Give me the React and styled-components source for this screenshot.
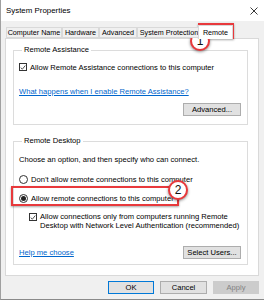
import React from "react";
import styled, { createGlobalStyle } from "styled-components";

const Global = createGlobalStyle`
  html, body { margin: 0; padding: 0; background: #fff; }
  body { font-family: "Liberation Sans", Arial, sans-serif; }
`;

const Window = styled.div`
  position: relative;
  width: 264px;
  height: 300px;
  box-sizing: border-box;
  background: #f0f0f0;
  border-left: 1px solid #a0a0a0;
  border-bottom: 1px solid #8a8a8a;
  overflow: hidden;
  color: #000;
  font-size: 7.6px;
`;

const TitleBar = styled.div`
  height: 21px;
  background: #fff;
  display: flex;
  align-items: center;
  justify-content: space-between;
  padding: 0 6px 0 5px;
  font-size: 7.9px;
`;

const Body = styled.div`
  padding: 3px 5px 0 4px;
`;

const TabStrip = styled.div`
  display: flex;
  align-items: flex-end;
  height: 14px;
  padding-left: 1px;
  position: relative;
  z-index: 1;
`;

const Tab = styled.div`
  position: relative;
  z-index: ${(p) => (p.$active ? 2 : 1)};
  width: ${(p) => p.$w}px;
  height: ${(p) => (p.$active ? "14px" : "11px")};
  margin-bottom: ${(p) => (p.$active ? "-1px" : "0")};
  margin-left: ${(p) => p.$shift || 0}px;
  box-sizing: border-box;
  overflow: hidden;
  display: flex;
  align-items: center;
  justify-content: center;
  background: ${(p) => (p.$active ? "#fff" : "#f0f0f0")};
  border: 1px solid #d9d9d9;
  border-bottom: ${(p) => (p.$active ? "none" : "1px solid #d9d9d9")};
  & + & { border-left: ${(p) => (p.$active ? "1px solid #d9d9d9" : "none")}; }
  white-space: nowrap;
  font-size: 7.2px;
`;

const Panel = styled.div`
  background: #fff;
  border: 1px solid #d9d9d9;
  height: 238px;
  box-sizing: border-box;
  padding: 6px 10px 0 7px;
`;

const Group = styled.fieldset`
  margin: 0 0 ${(p) => p.$gap || 0}px 0;
  padding: ${(p) => p.$pad};
  border: 1px solid #dcdcdc;
  min-width: 0;
`;

const Legend = styled.legend`
  padding: 0 2px;
  margin-left: 3px;
  line-height: 10px;
`;

const Row = styled.div`
  display: flex;
  align-items: center;
  gap: 3px;
  height: 10px;
  margin-top: ${(p) => p.$top || 0}px;
  padding-left: ${(p) => p.$indent || 0}px;
  white-space: nowrap;
`;

const Text = styled.div`
  line-height: 10px;
  margin-top: ${(p) => p.$top || 0}px;
`;

const Link = styled.span`
  color: #0066cc;
  text-decoration: underline;
`;

const Box = styled.span`
  width: 8px;
  height: 8px;
  box-sizing: border-box;
  border: 1px solid #333;
  background: #fff;
  display: inline-flex;
  align-items: center;
  justify-content: center;
  flex: none;
`;

const Radio = styled.span`
  width: 9px;
  height: 9px;
  box-sizing: border-box;
  border: 1px solid #333;
  border-radius: 50%;
  background: #fff;
  display: inline-flex;
  align-items: center;
  justify-content: center;
  flex: none;
  &::after {
    content: "";
    display: ${(p) => (p.$on ? "block" : "none")};
    width: 5px;
    height: 5px;
    border-radius: 50%;
    background: #222;
  }
`;

const CheckRow = styled.div`
  display: flex;
  align-items: flex-start;
  gap: 3px;
  margin-top: ${(p) => p.$top || 0}px;
  padding-left: ${(p) => p.$indent || 0}px;
  line-height: 9px;
  white-space: nowrap;
  & > span:first-child { margin-top: 1px; }
`;

const BtnRow = styled.div`
  display: flex;
  justify-content: ${(p) => p.$justify || "flex-end"};
  align-items: center;
  gap: 6px;
  margin-top: ${(p) => p.$top || 0}px;
`;

const Button = styled.div`
  width: ${(p) => p.$w || 58}px;
  height: 13px;
  box-sizing: border-box;
  border: 1px solid ${(p) => (p.$primary ? "#0078d7" : p.$disabled ? "#cccccc" : "#adadad")};
  background: ${(p) => (p.$disabled ? "#cccccc" : "#e1e1e1")};
  color: ${(p) => (p.$disabled ? "#838383" : "#000")};
  display: flex;
  align-items: center;
  justify-content: center;
`;

const Highlight = styled.div`
  position: absolute;
  left: ${(p) => p.$x}px;
  top: ${(p) => p.$y}px;
  width: ${(p) => p.$w}px;
  height: ${(p) => p.$h}px;
  box-sizing: border-box;
  border: 2px solid #e8393c;
  box-shadow: 0 1px 2px rgba(0, 0, 0, 0.35);
  pointer-events: none;
`;

const Badge = styled.div`
  position: absolute;
  left: ${(p) => p.$x - 10}px;
  top: ${(p) => p.$y - 10}px;
  width: 20px;
  height: 20px;
  box-sizing: border-box;
  border-radius: 50%;
  border: 2px solid #e8393c;
  background: #fff;
  box-shadow: 0 1px 3px rgba(0, 0, 0, 0.45);
  display: flex;
  align-items: center;
  justify-content: center;
  font-size: 12px;
  color: #111;
`;

const Check = () => (
  <svg width="7" height="7" viewBox="0 0 7 7">
    <path d="M0.8 3.6 L2.7 5.5 L6.2 1.2" fill="none" stroke="#222" strokeWidth="0.9" />
  </svg>
);

const Close = () => (
  <svg width="8" height="8" viewBox="0 0 8 8">
    <path d="M0.5 0.5 L7.5 7.5 M7.5 0.5 L0.5 7.5" stroke="#222" strokeWidth="0.9" />
  </svg>
);

export default function App() {
  return (
    <>
      <Global />
      <Window>
        <TitleBar>
          <span>System Properties</span>
          <Close />
        </TitleBar>
        <Body>
          <TabStrip>
            <Tab $w={56}>Computer Name</Tab>
            <Tab $w={37}>Hardware</Tab>
            <Tab $w={38}>Advanced</Tab>
            <Tab $w={64}>System Protection</Tab>
            <Tab $w={35} $active $shift={-3}>Remote</Tab>
          </TabStrip>
          <Panel>
            <Group $pad="7px 6px 8px 5px" $gap={11}>
              <Legend>Remote Assistance</Legend>
              <Row>
                <Box><Check /></Box>
                Allow Remote Assistance connections to this computer
              </Row>
              <Row $top={14}>
                <Link>What happens when I enable Remote Assistance?</Link>
              </Row>
              <BtnRow $top={7}>
                <Button $w={58}>Advanced...</Button>
              </BtnRow>
            </Group>
            <Group $pad="9px 6px 5px 5px">
              <Legend>Remote Desktop</Legend>
              <Text>Choose an option, and then specify who can connect.</Text>
              <Row $top={9}>
                <Radio />
                Don’t allow remote connections to this computer
              </Row>
              <Row $top={9}>
                <Radio $on />
                Allow remote connections to this computer
              </Row>
              <CheckRow $top={9} $indent={10}>
                <Box><Check /></Box>
                <span>
                  Allow connections only from computers running Remote
                  <br />
                  Desktop with Network Level Authentication (recommended)
                </span>
              </CheckRow>
              <BtnRow $top={16} $justify="space-between">
                <Link>Help me choose</Link>
                <Button $w={58}>Select Users...</Button>
              </BtnRow>
            </Group>
          </Panel>
          <BtnRow $top={5}>
            <Button $w={46} $primary>OK</Button>
            <Button $w={47}>Cancel</Button>
            <Button $w={46} $disabled>Apply</Button>
          </BtnRow>
        </Body>
        <Highlight $x={197} $y={23} $w={36} $h={16} />
        <Highlight $x={10} $y={186} $w={168} $h={20} />
        <Badge $x={199} $y={41}>1</Badge>
        <Badge $x={177} $y={190}>2</Badge>
      </Window>
    </>
  );
}
